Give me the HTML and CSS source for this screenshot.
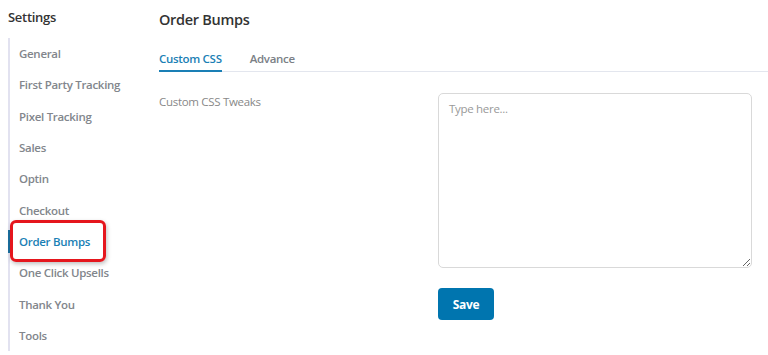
FILE: index.html
```html
<!DOCTYPE html>
<html lang="en">
<head>
<meta charset="UTF-8">
<title>Settings – Order Bumps</title>
<link rel="stylesheet" href="styles.css">
</head>
<body>

<div class="settings-page">

  <!-- SIDEBAR -->
  <div class="sidebar">
    <h2 class="sidebar-title">Settings</h2>
    <ul class="nav">
      <li><a href="#">General</a></li>
      <li><a href="#">First Party Tracking</a></li>
      <li><a href="#">Pixel Tracking</a></li>
      <li><a href="#">Sales</a></li>
      <li><a href="#">Optin</a></li>
      <li><a href="#">Checkout</a></li>
      <li class="active"><a href="#">Order Bumps</a></li>
      <li><a href="#">One Click Upsells</a></li>
      <li><a href="#">Thank You</a></li>
      <li><a href="#">Tools</a></li>
    </ul>
  </div>

  <!-- MAIN -->
  <div class="main">
    <h1 class="page-title">Order Bumps</h1>

    <div class="tabs">
      <a href="#" class="tab current">Custom CSS</a>
      <a href="#" class="tab">Advance</a>
    </div>

    <div class="field-row">
      <label class="field-label" for="css">Custom CSS Tweaks</label>
      <div class="field-control">
        <textarea id="css" class="css-box" placeholder="Type here..."></textarea>
        <button class="btn-save">Save</button>
      </div>
    </div>
  </div>

</div>

</body>
</html>
```

FILE: styles.css
```css
* { box-sizing: border-box; font-family: "Open Sans", Arial, sans-serif; letter-spacing: -0.3px; }
body { margin: 0; background: #fff; color: #333; }

.settings-page {
  display: flex;
  height: 355px;
  overflow: hidden;
}

/* SIDEBAR */
.sidebar {
  width: 150px;
  flex-shrink: 0;
  padding-left: 8px;
}

.sidebar-title {
  margin: 7px 0 11px;
  font-size: 13px;
  font-weight: 600;
  color: #333;
  line-height: 20px;
}

.nav {
  list-style: none;
  margin: 0;
  padding: 0;
  border-left: 2px solid #e2e2f0;
}

.nav li {
  height: 31.3px;
  display: flex;
  align-items: center;
  position: relative;
}

.nav a {
  padding-left: 9px;
  font-size: 11.5px;
  font-weight: 600;
  color: #82868c;
  text-decoration: none;
  white-space: nowrap;
}

.nav li.active a { color: #1a7fb5; }

.nav li.active::before {
  content: "";
  position: absolute;
  left: -2px;
  top: 4px;
  bottom: 4px;
  width: 2px;
  background: #1a6f9f;
}

/* red highlight around the active item */
.nav li.active::after {
  content: "";
  position: absolute;
  left: 0;
  top: -6px;
  width: 90px;
  height: 36px;
  border: 3px solid #e5161d;
  border-radius: 6px;
  box-shadow: 1px 2px 4px rgba(0, 0, 0, 0.25);
}

/* MAIN */
.main {
  flex: 1;
  padding-left: 9px;
}

.page-title {
  margin: 9px 0 0;
  font-size: 14.5px;
  font-weight: 600;
  color: #333;
  line-height: 22px;
}

.tabs {
  display: flex;
  gap: 28px;
  margin-top: 17px;
  border-bottom: 1px solid #e3e6ee;
}

.tab {
  padding: 3px 0 4px;
  font-size: 11.5px;
  font-weight: 600;
  color: #7b7f86;
  text-decoration: none;
  border-bottom: 2px solid transparent;
  margin-bottom: -1px;
}

.tab.current {
  color: #1a7fb5;
  border-bottom-color: #1a7fb5;
}

.field-row {
  display: flex;
  margin-top: 21px;
}

.field-label {
  width: 279px;
  font-size: 11.5px;
  color: #888;
  padding-top: 1px;
}

.field-control {
  display: flex;
  flex-direction: column;
  align-items: flex-start;
}

.css-box {
  width: 314px;
  height: 175px;
  border: 1px solid #d9d9d9;
  border-radius: 5px;
  padding: 7px 10px;
  font-size: 11.5px;
  resize: vertical;
  outline: none;
}

.css-box::placeholder { color: #999; }

.btn-save {
  margin-top: 20px;
  width: 56px;
  height: 32px;
  border: none;
  border-radius: 4px;
  background: #0075af;
  color: #fff;
  font-size: 12px;
  font-weight: 700;
  cursor: pointer;
}
```
